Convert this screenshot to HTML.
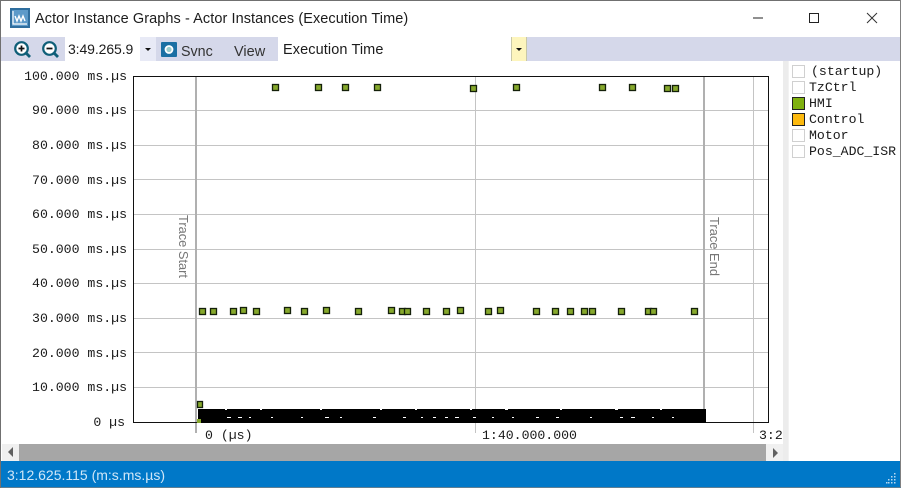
<!DOCTYPE html>
<html><head><meta charset="utf-8"><style>
html,body{margin:0;padding:0;background:#fff;}
#r{position:relative;width:901px;height:488px;overflow:hidden;background:#fff;font-family:"Liberation Sans",sans-serif;}
#r div{position:absolute;}
.t{white-space:nowrap;color:#1c1c1c;}
text{font-family:"Liberation Mono",monospace;font-size:13.2px;fill:#1a1a1a;}
text.v{font-family:"Liberation Sans",sans-serif;font-size:13px;fill:#777;}
</style></head><body><div id="r">
<div style="left:0;top:0;width:901px;height:1px;background:#707070"></div>
<div style="left:0;top:0;width:1px;height:488px;background:#707070"></div>
<div style="left:900px;top:0;width:1px;height:488px;background:#808080"></div>
<svg style="position:absolute;left:10px;top:8px" width="20" height="20" viewBox="0 0 20 20"><rect width="20" height="20" fill="#2f6e9e"/><rect x="2" y="2" width="16" height="16" fill="#5d9ac9"/><path d="M3 3V16H17" stroke="#fff" stroke-width="1.2" fill="none"/><path d="M5 8L7 13L9 8L11 13L13 8L15 13" stroke="#fff" stroke-width="1.4" fill="none"/></svg>
<div class="t" style="left:35px;top:10px;font-size:14.5px;line-height:18px;letter-spacing:.075px">Actor Instance Graphs - Actor Instances (Execution Time)</div>
<svg style="position:absolute;left:750px;top:8px" width="140" height="22"><path d="M3 10H13" stroke="#222"/><rect x="59.500" y="5.500" width="9" height="9" fill="none" stroke="#222"/><path d="M117 5L127 15M127 5L117 15" stroke="#333"/></svg>

<div style="left:1px;top:37px;width:899px;height:24px;background:#d5d8ea"></div>
<div style="left:65px;top:37px;width:75px;height:24px;background:#fff"></div>
<div style="left:140px;top:37px;width:16px;height:24px;background:#e8eaf6"></div>
<div style="left:278px;top:37px;width:233px;height:24px;background:#fff"></div>
<div style="left:511px;top:37px;width:16px;height:24px;background:#fdf5bd;border-left:1px solid #c8c8a8;border-right:1px solid #c8c8a8;box-sizing:border-box"></div>
<svg style="position:absolute;left:10px;top:39px" width="55" height="20"><g fill="#fff" stroke="#0f5f78" stroke-width="2.200"><circle cx="11.500" cy="9.500" r="6.300"/><path d="M16 14L20 18" stroke-width="2.800"/><circle cx="39.500" cy="9.500" r="6.300"/><path d="M44 14L48 18" stroke-width="2.800"/></g><path d="M8.500 9.500H14.500M11.500 6.500V12.500M36.500 9.500H42.500" stroke="#111" stroke-width="1.700"/></svg>
<div class="t" style="left:68px;top:40px;font-size:14px;line-height:18px;letter-spacing:-.1px">3:49.265.9</div>
<svg style="position:absolute;left:144px;top:47px" width="8" height="5"><path d="M1 1H7L4 4Z" fill="#111"/></svg>
<svg style="position:absolute;left:161px;top:42px" width="16" height="16"><rect width="16" height="15" rx="1" fill="#1a6fa3"/><circle cx="8" cy="7.500" r="3.500" fill="#9cc" stroke="#fff" stroke-width="1.800"/></svg>
<div class="t" style="left:181px;top:43px;font-size:14.300px;line-height:18px;color:#333">Svnc</div>
<div class="t" style="left:234px;top:43px;font-size:14.500px;line-height:18px;color:#333">View</div>
<div class="t" style="left:283px;top:41px;font-size:14.500px;line-height:18px;letter-spacing:.1px">Execution Time</div>
<svg style="position:absolute;left:515px;top:47px" width="8" height="5"><path d="M1 1H7L4 4Z" fill="#111"/></svg>

<svg style="position:absolute;left:0;top:62px" width="790" height="384" viewBox="0 62 790 384">
<g stroke="#c4c4c4" stroke-width="1"><path d="M133 110.500H769M133 145.500H769M133 179.500H769M133 214.500H769M133 249.500H769M133 283.500H769M133 318.500H769M133 352.500H769M133 387.500H769"/><path d="M475.500 76V433M753.500 76V433"/></g>
<path d="M196 76V433M704 76V410" stroke="#b0b0b0" stroke-width="2"/>
<rect x="133.500" y="76.500" width="635" height="346" fill="none" stroke="#111"/>
<g text-anchor="end">
<text x="127" y="80">100.000 ms.µs</text><text x="127" y="114">90.000 ms.µs</text><text x="127" y="149">80.000 ms.µs</text><text x="127" y="184">70.000 ms.µs</text><text x="127" y="218">60.000 ms.µs</text><text x="127" y="253">50.000 ms.µs</text><text x="127" y="287">40.000 ms.µs</text><text x="127" y="322">30.000 ms.µs</text><text x="127" y="357">20.000 ms.µs</text><text x="127" y="391">10.000 ms.µs</text><text x="125" y="426">0 µs</text>
</g>
<text x="205" y="439">0 (µs)</text><text x="482" y="439">1:40.000.000</text><text x="759" y="439">3:2</text>
<text class="v" transform="translate(179,215) rotate(90)" textLength="63" lengthAdjust="spacingAndGlyphs">Trace Start</text><text class="v" transform="translate(710,217) rotate(90)" textLength="59" lengthAdjust="spacingAndGlyphs">Trace End</text>
<g fill="#86a82c" stroke="#14200a" stroke-width="1.300">
<rect x="272.500" y="84.500" width="6" height="6"/><rect x="315.500" y="84.500" width="6" height="6"/><rect x="342.500" y="84.500" width="6" height="6"/><rect x="374.500" y="84.500" width="6" height="6"/><rect x="470.500" y="85.500" width="6" height="6"/><rect x="513.500" y="84.500" width="6" height="6"/><rect x="599.500" y="84.500" width="6" height="6"/><rect x="629.500" y="84.500" width="6" height="6"/><rect x="664.500" y="85.500" width="6" height="6"/><rect x="672.500" y="85.500" width="6" height="6"/>
<rect x="199.500" y="308.500" width="6" height="6"/><rect x="210.500" y="308.500" width="6" height="6"/><rect x="230.500" y="308.500" width="6" height="6"/><rect x="240.500" y="307.500" width="6" height="6"/><rect x="253.500" y="308.500" width="6" height="6"/><rect x="284.500" y="307.500" width="6" height="6"/><rect x="301.500" y="308.500" width="6" height="6"/><rect x="323.500" y="307.500" width="6" height="6"/><rect x="355.500" y="308.500" width="6" height="6"/><rect x="388.500" y="307.500" width="6" height="6"/><rect x="399.500" y="308.500" width="6" height="6"/><rect x="404.500" y="308.500" width="6" height="6"/><rect x="423.500" y="308.500" width="6" height="6"/><rect x="443.500" y="308.500" width="6" height="6"/><rect x="457.500" y="307.500" width="6" height="6"/><rect x="485.500" y="308.500" width="6" height="6"/><rect x="497.500" y="307.500" width="6" height="6"/><rect x="533.500" y="308.500" width="6" height="6"/><rect x="552.500" y="308.500" width="6" height="6"/><rect x="567.500" y="308.500" width="6" height="6"/><rect x="581.500" y="308.500" width="6" height="6"/><rect x="589.500" y="308.500" width="6" height="6"/><rect x="618.500" y="308.500" width="6" height="6"/><rect x="645.500" y="308.500" width="6" height="6"/><rect x="650.500" y="308.500" width="6" height="6"/><rect x="691.500" y="308.500" width="6" height="6"/>
<rect x="197.500" y="401.500" width="5" height="6"/>
</g>
<rect x="198" y="409" width="508" height="14" fill="#000"/>
<rect x="197" y="419" width="4" height="4" fill="#86a82c"/>
<path d="M227 417.500h4M238 417.500h4M249 417.500h2M271 417.500h2M301 417.500h2M325 417.500h4M340 417.500h2M373 417.500h3M403 417.500h3M421 417.500h2M433 417.500h3M445 417.500h3M455 417.500h4M473 417.500h3M492 417.500h2M512 417.500h2M536 417.500h3M556 417.500h3M590 417.500h2M620 417.500h3M631 417.500h4M652 417.500h2M672 417.500h2M225 409.500h2M260 409.500h2M320 409.500h2M380 409.500h2M415 409.500h2M470 409.500h2M505 409.500h3M560 409.500h2M615 409.500h3M660 409.500h2" stroke="#fff" stroke-width="1"/>
</svg>

<div style="left:788px;top:61px;width:1px;height:400px;background:#f2f2f2"></div>
<div style="left:783px;top:61px;width:5px;height:400px;background:#ececec"></div>
<div style="left:2px;top:444px;width:781px;height:17px;background:#f0f0f0"></div>
<div style="left:19px;top:444px;width:747px;height:17px;background:#a6a6a6"></div>
<svg style="position:absolute;left:5px;top:446px" width="10" height="13"><path d="M8 1V11L3 6Z" fill="#606060"/></svg>
<svg style="position:absolute;left:771px;top:447px" width="10" height="13"><path d="M2 1V11L7 6Z" fill="#606060"/></svg>

<svg style="position:absolute;left:791px;top:62px" width="110" height="100">
<rect x="1.500" y="3.500" width="12" height="12" fill="#fff" stroke="#d0d0d0"/><rect x="1.500" y="19.500" width="12" height="12" fill="#fff" stroke="#d0d0d0"/><rect x="1.500" y="35.500" width="12" height="12" fill="#7fb10f" stroke="#222"/><rect x="1.500" y="51.500" width="12" height="12" fill="#fcb90e" stroke="#222"/><rect x="1.500" y="67.500" width="12" height="12" fill="#fff" stroke="#d0d0d0"/><rect x="1.500" y="83.500" width="12" height="12" fill="#fff" stroke="#d0d0d0"/>
<text x="20" y="13">(startup)</text><text x="18" y="29">TzCtrl</text><text x="18" y="45">HMI</text><text x="18" y="61">Control</text><text x="18" y="77">Motor</text><text x="18" y="93">Pos_ADC_ISR</text>
</svg>

<div style="left:1px;top:461px;width:899px;height:26px;background:#0078c8"></div>
<div style="left:1px;top:487px;width:900px;height:1px;background:#5f7f93"></div>
<div class="t" style="left:7px;top:466px;font-size:14px;line-height:18px;color:#cfe6f7">3:12.625.115 (m:s.ms.µs)</div>
<svg style="position:absolute;left:886px;top:473px" width="11" height="11" fill="#b8d9f0"><rect x="8" y="0" width="1.500" height="1.500"/><rect x="5" y="3" width="1.500" height="1.500"/><rect x="8" y="3" width="1.500" height="1.500"/><rect x="2" y="6" width="1.500" height="1.500"/><rect x="5" y="6" width="1.500" height="1.500"/><rect x="8" y="6" width="1.500" height="1.500"/><rect x="0" y="9" width="1.500" height="1.500"/><rect x="2" y="9" width="1.500" height="1.500"/><rect x="5" y="9" width="1.500" height="1.500"/><rect x="8" y="9" width="1.500" height="1.500"/></svg>
</div></body></html>
